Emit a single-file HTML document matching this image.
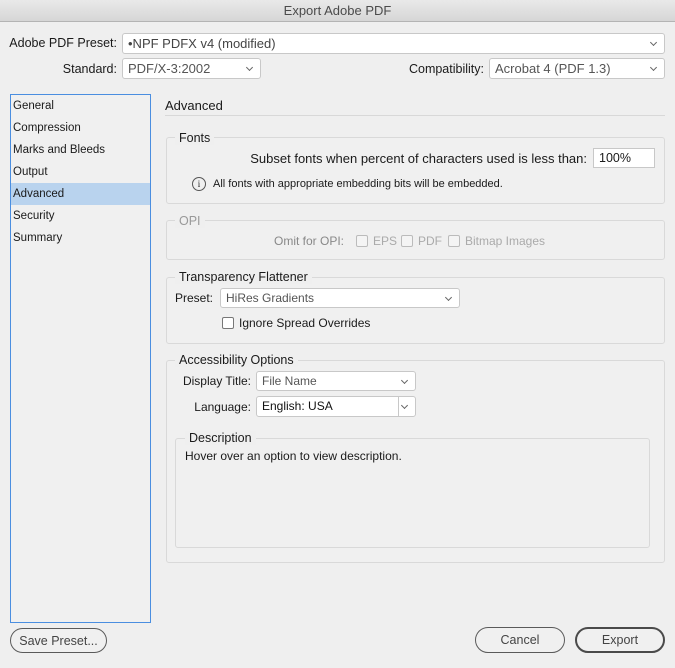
<!DOCTYPE html>
<html><head><meta charset="utf-8"><style>
*{box-sizing:border-box;margin:0;padding:0}
body{width:675px;height:668px;background:#efefef;font-family:"Liberation Sans","DejaVu Sans",sans-serif;font-size:12px;color:#1a1a1a;position:relative;overflow:hidden}
.a{position:absolute;white-space:nowrap}
.r{text-align:right}
.title{left:0;top:0;width:675px;height:22px;background:linear-gradient(#e9e9e9,#d6d6d6);border-bottom:1px solid #b4b4b4;text-align:center;line-height:22px;font-size:13px;color:#4b4b4b}
.dd{position:absolute;background:#fff;border:1px solid #c8c8c8;border-radius:3px;color:#555;padding-left:5px;line-height:19px;font-size:12px}
.dd:after{content:"";position:absolute;right:8px;top:6px;width:4px;height:4px;border-right:1px solid #666;border-bottom:1px solid #666;transform:rotate(45deg)}
.grp{position:absolute;border:1px solid #d9d9d9;border-radius:3px;background:#f0f0f0}
.gl{position:absolute;background:#efefef;padding:0 4px;font-size:12.5px;line-height:14px}
.btn{position:absolute;border:1px solid #5a5a5a;border-radius:13px;text-align:center;color:#444;font-size:12.5px;line-height:24px;background:#f0f0f0}
.cb{position:absolute;width:12px;height:12px;border:1px solid #777;border-radius:2px;background:#fff}
.list div{height:22px;line-height:22px;padding-left:2px}
</style></head><body>
<div class="a title">Export Adobe PDF</div>

<div class="a r" style="left:0;width:117px;top:36px;font-size:12.5px">Adobe PDF Preset:</div>
<div class="dd" style="left:122px;top:33px;width:543px;height:21px;color:#444;font-size:13px">•NPF PDFX v4 (modified)</div>
<div class="a r" style="left:0;width:117px;top:62px;font-size:12.5px">Standard:</div>
<div class="dd" style="left:122px;top:58px;width:139px;height:21px;font-size:13px">PDF/X-3:2002</div>
<div class="a r" style="left:380px;width:104px;top:62px;font-size:12.5px">Compatibility:</div>
<div class="dd" style="left:489px;top:58px;width:176px;height:21px;font-size:13px">Acrobat 4 (PDF 1.3)</div>

<div class="a list" style="left:10px;top:94px;width:141px;height:529px;border:1px solid #4a8ee0;background:#f0f0f0;font-size:11.5px;padding-top:0">
<div>General</div><div>Compression</div><div>Marks and Bleeds</div><div>Output</div><div style="background:#b9d3ee">Advanced</div><div>Security</div><div>Summary</div>
</div>

<div class="a" style="left:165px;top:98px;font-size:13px">Advanced</div>
<div class="a" style="left:165px;top:115px;width:500px;height:1px;background:#d8d8d8"></div>

<div class="grp" style="left:166px;top:137px;width:499px;height:67px"></div>
<div class="gl" style="left:175px;top:131px">Fonts</div>
<div class="a r" style="left:200px;width:387px;top:151px;font-size:13px">Subset fonts when percent of characters used is less than:</div>
<div class="a" style="left:593px;top:148px;width:62px;height:20px;background:#fff;border:1px solid #c8c8c8;padding-left:5px;line-height:18px;font-size:12.5px">100%</div>
<div class="a" style="left:192px;top:177px;width:14px;height:14px;border:1px solid #555;border-radius:50%;font-size:9px;text-align:center;line-height:12px;font-family:'Liberation Serif',serif">i</div>
<div class="a" style="left:213px;top:178px;font-size:11px">All fonts with appropriate embedding bits will be embedded.</div>

<div class="grp" style="left:166px;top:220px;width:499px;height:40px"></div>
<div class="gl" style="left:175px;top:214px;color:#999">OPI</div>
<div class="a" style="left:274px;top:234px;color:#888">Omit for OPI:</div>
<div class="cb" style="left:356px;top:235px;border-color:#bbb;background:#f4f4f4"></div>
<div class="a" style="left:373px;top:234px;color:#aaa">EPS</div>
<div class="cb" style="left:401px;top:235px;border-color:#bbb;background:#f4f4f4"></div>
<div class="a" style="left:418px;top:234px;color:#aaa">PDF</div>
<div class="cb" style="left:448px;top:235px;border-color:#bbb;background:#f4f4f4"></div>
<div class="a" style="left:465px;top:234px;color:#aaa">Bitmap Images</div>

<div class="grp" style="left:166px;top:277px;width:499px;height:67px"></div>
<div class="gl" style="left:175px;top:270px">Transparency Flattener</div>
<div class="a" style="left:175px;top:291px">Preset:</div>
<div class="dd" style="left:220px;top:288px;width:240px;height:20px">HiRes Gradients</div>
<div class="cb" style="left:222px;top:317px"></div>
<div class="a" style="left:239px;top:316px">Ignore Spread Overrides</div>

<div class="grp" style="left:166px;top:360px;width:499px;height:203px"></div>
<div class="gl" style="left:175px;top:353px">Accessibility Options</div>
<div class="a r" style="left:150px;width:101px;top:374px">Display Title:</div>
<div class="dd" style="left:256px;top:371px;width:160px;height:20px">File Name</div>
<div class="a r" style="left:150px;width:101px;top:400px">Language:</div>
<div class="dd" style="left:256px;top:396px;width:160px;height:21px;color:#111">English: USA<span style="position:absolute;left:141px;top:0;width:1px;height:19px;background:#c8c8c8"></span></div>
<div class="grp" style="left:175px;top:438px;width:475px;height:110px"></div>
<div class="gl" style="left:185px;top:431px">Description</div>
<div class="a" style="left:185px;top:449px">Hover over an option to view description.</div>

<div class="btn" style="left:10px;top:628px;width:97px;height:25px">Save Preset...</div>
<div class="btn" style="left:475px;top:627px;width:90px;height:26px">Cancel</div>
<div class="btn" style="left:575px;top:627px;width:90px;height:26px;border:2px solid #4a4a4a;line-height:22px">Export</div>
</body></html>
